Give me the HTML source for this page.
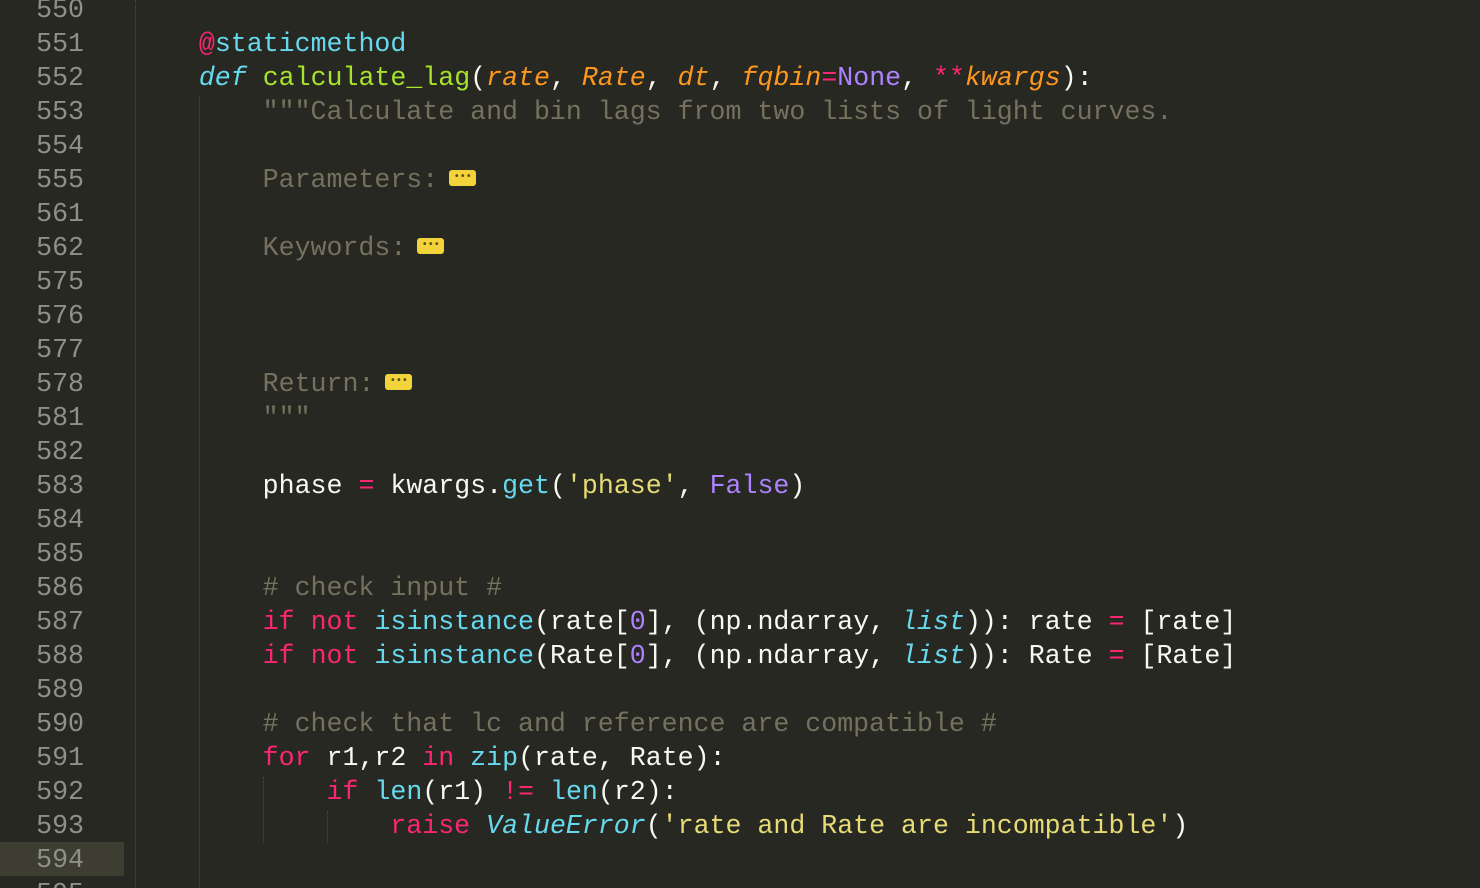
<!DOCTYPE html>
<html><head><meta charset="utf-8"><style>
html,body{margin:0;padding:0;background:#272822;width:1480px;height:888px;overflow:hidden}
body{position:relative;font-family:"Liberation Mono",monospace;font-size:26.6px}
.row{position:absolute;left:0;height:34px;line-height:34px;width:1480px;white-space:pre}
.ln{position:absolute;left:0;width:84px;text-align:right;color:#8f908a}
.code{position:absolute;left:135px;color:#f8f8f2}
.hl{position:absolute;left:0;top:842px;width:124px;height:34px;background:#3e3d32}
.vl{position:absolute;border-left:1px dotted #4a4a44;width:0}
.p{color:#f92672}.c{color:#66d9ef}.g{color:#a6e22e}.o{color:#fd971f}.v{color:#ae81ff}.y{color:#e6db74}.m{color:#75715e}.i{font-style:italic}
.f{display:inline-block;width:27px;height:16px;background:#f2d33a;border-radius:3px;vertical-align:middle;position:relative;top:-2px;margin-left:11px;text-align:center;line-height:16px;font-size:10px;color:#5a4d1a;letter-spacing:0;font-weight:bold}
</style></head><body>
<div class="hl"></div>
<div class="vl" style="left:135px;top:0;height:888px"></div>
<div class="vl" style="left:199px;top:97px;height:791px"></div>
<div class="vl" style="left:263px;top:777px;height:66px"></div>
<div class="vl" style="left:327px;top:811px;height:32px"></div>

<div class="row" style="top:-7px"><span class="ln">550</span></div>
<div class="row" style="top:27px"><span class="ln">551</span><span class="code">    <span class="p">@</span><span class="c">staticmethod</span></span></div>
<div class="row" style="top:61px"><span class="ln">552</span><span class="code">    <span class="c i">def</span> <span class="g">calculate_lag</span>(<span class="o i">rate</span>, <span class="o i">Rate</span>, <span class="o i">dt</span>, <span class="o i">fqbin</span><span class="p">=</span><span class="v">None</span>, <span class="p">**</span><span class="o i">kwargs</span>):</span></div>
<div class="row" style="top:95px"><span class="ln">553</span><span class="code m">        """Calculate and bin lags from two lists of light curves.</span></div>
<div class="row" style="top:129px"><span class="ln">554</span></div>
<div class="row" style="top:163px"><span class="ln">555</span><span class="code m">        Parameters:<span class="f">•••</span></span></div>
<div class="row" style="top:197px"><span class="ln">561</span></div>
<div class="row" style="top:231px"><span class="ln">562</span><span class="code m">        Keywords:<span class="f">•••</span></span></div>
<div class="row" style="top:265px"><span class="ln">575</span></div>
<div class="row" style="top:299px"><span class="ln">576</span></div>
<div class="row" style="top:333px"><span class="ln">577</span></div>
<div class="row" style="top:367px"><span class="ln">578</span><span class="code m">        Return:<span class="f">•••</span></span></div>
<div class="row" style="top:401px"><span class="ln">581</span><span class="code m">        """</span></div>
<div class="row" style="top:435px"><span class="ln">582</span></div>
<div class="row" style="top:469px"><span class="ln">583</span><span class="code">        phase <span class="p">=</span> kwargs.<span class="c">get</span>(<span class="y">'phase'</span>, <span class="v">False</span>)</span></div>
<div class="row" style="top:503px"><span class="ln">584</span></div>
<div class="row" style="top:537px"><span class="ln">585</span></div>
<div class="row" style="top:571px"><span class="ln">586</span><span class="code m">        # check input #</span></div>
<div class="row" style="top:605px"><span class="ln">587</span><span class="code">        <span class="p">if</span> <span class="p">not</span> <span class="c">isinstance</span>(rate[<span class="v">0</span>], (np.ndarray, <span class="c i">list</span>)): rate <span class="p">=</span> [rate]</span></div>
<div class="row" style="top:639px"><span class="ln">588</span><span class="code">        <span class="p">if</span> <span class="p">not</span> <span class="c">isinstance</span>(Rate[<span class="v">0</span>], (np.ndarray, <span class="c i">list</span>)): Rate <span class="p">=</span> [Rate]</span></div>
<div class="row" style="top:673px"><span class="ln">589</span></div>
<div class="row" style="top:707px"><span class="ln">590</span><span class="code m">        # check that lc and reference are compatible #</span></div>
<div class="row" style="top:741px"><span class="ln">591</span><span class="code">        <span class="p">for</span> r1,r2 <span class="p">in</span> <span class="c">zip</span>(rate, Rate):</span></div>
<div class="row" style="top:775px"><span class="ln">592</span><span class="code">            <span class="p">if</span> <span class="c">len</span>(r1) <span class="p">!=</span> <span class="c">len</span>(r2):</span></div>
<div class="row" style="top:809px"><span class="ln">593</span><span class="code">                <span class="p">raise</span> <span class="c i">ValueError</span>(<span class="y">'rate and Rate are incompatible'</span>)</span></div>
<div class="row" style="top:843px"><span class="ln">594</span></div>
<div class="row" style="top:877px"><span class="ln">595</span></div>
</body></html>
